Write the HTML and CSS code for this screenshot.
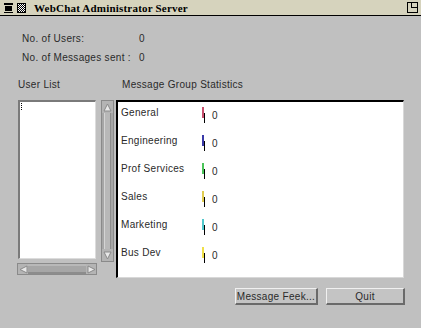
FILE: index.html
```html
<!DOCTYPE html>
<html lang="en">

<head>
  <meta charset="UTF-8">
  <title>WebChat Administrator Server</title>
  <link rel="stylesheet" href="styles.css">
</head>

<body>
  <div class="titlebar">
    <svg class="tb-icon" width="9" height="10" viewBox="0 0 9 10">
      <rect x="0" y="0" width="9" height="2" fill="#000"/>
      <rect x="1" y="3" width="7" height="5" fill="#000"/>
      <rect x="0" y="9" width="9" height="1" fill="#000"/>
    </svg>
    <svg class="tb-icon" width="9" height="10" viewBox="0 0 9 10">
      <rect x="0" y="0" width="9" height="10" fill="#000"/>
      <path d="M1 1h1v1h-1zM3 1h1v1h-1zM5 1h1v1h-1zM7 1h1v1h-1zM2 2h1v1h-1zM4 2h1v1h-1zM6 2h1v1h-1zM1 3h1v1h-1zM3 3h1v1h-1zM5 3h1v1h-1zM7 3h1v1h-1zM2 4h1v1h-1zM4 4h1v1h-1zM6 4h1v1h-1zM1 5h1v1h-1zM3 5h1v1h-1zM5 5h1v1h-1zM7 5h1v1h-1zM2 6h1v1h-1zM4 6h1v1h-1zM6 6h1v1h-1zM1 7h1v1h-1zM3 7h1v1h-1zM5 7h1v1h-1zM7 7h1v1h-1zM2 8h1v1h-1zM4 8h1v1h-1zM6 8h1v1h-1z" fill="#fff"/>
    </svg>
    <span class="title">WebChat Administrator Server</span>
    <svg class="tb-max" width="11" height="11" viewBox="0 0 11 11">
      <rect x="0.5" y="0.5" width="10" height="10" fill="none" stroke="#000"/>
      <rect x="4.5" y="0.5" width="6" height="5" fill="none" stroke="#000"/>
    </svg>
  </div>

  <div class="main">
    <div class="counts">
      <div class="count-row"><span class="count-label">No. of Users:</span><span>0</span></div>
      <div class="count-row"><span class="count-label">No. of Messages sent :</span><span>0</span></div>
    </div>

    <div class="labels">
      <span class="lbl-users">User List</span>
      <span class="lbl-stats">Message Group Statistics</span>
    </div>

    <div class="panels">
      <div class="list-col">
        <div class="user-list"><span class="caret"></span></div>
        <div class="hscroll">
          <span class="arrow-box">
            <svg width="9" height="9" viewBox="0 0 9 9"><path d="M1 4.5L8 1V8Z" fill="#e8e8e8" stroke="#8a8a8a"/></svg>
          </span>
          <span class="htrack"></span>
          <span class="arrow-box">
            <svg width="9" height="9" viewBox="0 0 9 9"><path d="M8 4.5L1 1V8Z" fill="#e8e8e8" stroke="#8a8a8a"/></svg>
          </span>
        </div>
      </div>

      <div class="vscroll">
        <span class="arrow-box">
          <svg width="9" height="9" viewBox="0 0 9 9"><path d="M4.5 1L8 8H1Z" fill="#e8e8e8" stroke="#8a8a8a"/></svg>
        </span>
        <span class="vtrack"></span>
        <span class="arrow-box">
          <svg width="9" height="9" viewBox="0 0 9 9"><path d="M4.5 8L8 1H1Z" fill="#e8e8e8" stroke="#8a8a8a"/></svg>
        </span>
      </div>

      <div class="stats">
        <div class="stat-row"><span class="group">General</span><span class="bar" style="background:#c8506e"></span><span class="tick"></span><span class="num">0</span></div>
        <div class="stat-row"><span class="group">Engineering</span><span class="bar" style="background:#3a3aa8"></span><span class="tick"></span><span class="num">0</span></div>
        <div class="stat-row"><span class="group">Prof Services</span><span class="bar" style="background:#4cc45a"></span><span class="tick"></span><span class="num">0</span></div>
        <div class="stat-row"><span class="group">Sales</span><span class="bar" style="background:#e0cc50"></span><span class="tick"></span><span class="num">0</span></div>
        <div class="stat-row"><span class="group">Marketing</span><span class="bar" style="background:#50c8cc"></span><span class="tick"></span><span class="num">0</span></div>
        <div class="stat-row"><span class="group">Bus Dev</span><span class="bar" style="background:#f0e048"></span><span class="tick"></span><span class="num">0</span></div>
      </div>
    </div>

    <div class="buttons">
      <button class="btn btn-feek">Message Feek...</button>
      <button class="btn btn-quit">Quit</button>
    </div>
  </div>
</body>

</html>
```

FILE: styles.css
```css
body {
  margin: 0;
  width: 421px;
  height: 328px;
  overflow: hidden;
  background-color: #c0c0c0;
  font-family: "Liberation Sans", Arial, sans-serif;
  font-size: 10px;
  color: #2a2a2a;
  letter-spacing: 0.3px;
}

.titlebar {
  display: flex;
  align-items: center;
  height: 15px;
  border-bottom: 1px solid #000;
  background-color: #d6d3bd;
  padding-left: 4px;
  padding-right: 3px;
}

.tb-icon {
  margin-right: 4px;
}

.title {
  margin-left: 4px;
  font-family: "Liberation Serif", "Times New Roman", serif;
  font-weight: bold;
  font-size: 11px;
  letter-spacing: 0.2px;
  color: #000;
}

.tb-max {
  margin-left: auto;
}

.main {
  display: flex;
  flex-direction: column;
}

.counts {
  padding-top: 13px;
  padding-left: 22px;
}

.count-row {
  display: flex;
  height: 19px;
  line-height: 19px;
}

.count-label {
  width: 117px;
}

.labels {
  display: flex;
  margin-top: 8px;
  height: 19px;
  line-height: 19px;
  padding-left: 18px;
}

.lbl-users {
  width: 104px;
}

.panels {
  display: flex;
  margin-top: 6px;
  padding-left: 17px;
}

.list-col {
  display: flex;
  flex-direction: column;
  width: 81px;
}

.user-list {
  margin-left: 1px;
  width: 75px;
  height: 156px;
  background: #fff;
  border-top: 2px solid #7a7a7a;
  border-left: 2px solid #7a7a7a;
  border-right: 1px solid #dcdcdc;
  border-bottom: 1px solid #dcdcdc;
}

.caret {
  display: block;
  margin: 1px 0 0 1px;
  width: 1px;
  height: 7px;
  border-left: 1px dotted #000;
}

.hscroll {
  display: flex;
  margin-top: 4px;
  width: 80px;
  height: 12px;
  background: #a6a6a6;
  border: 1px solid #8a8a8a;
  box-sizing: border-box;
}

.htrack {
  flex: 1;
  border-top: 2px solid #b8b8b8;
  border-bottom: 2px solid #8c8c8c;
}

.arrow-box {
  display: flex;
  align-items: center;
  justify-content: center;
  width: 10px;
  height: 10px;
  background: #b4b4b4;
}

.vscroll {
  display: flex;
  flex-direction: column;
  margin-left: 3px;
  width: 13px;
  height: 162px;
  background: #a6a6a6;
  border: 1px solid #8a8a8a;
  box-sizing: border-box;
}

.vscroll .arrow-box {
  width: 11px;
  height: 12px;
}

.vtrack {
  flex: 1;
  margin: 0 2px;
  background: #b8b8b8;
  border-left: 1px solid #d4d4d4;
  border-right: 1px solid #8c8c8c;
}

.stats {
  margin-left: 2px;
  width: 282px;
  height: 171px;
  padding-top: 4px;
  padding-left: 3px;
  background: #fff;
  border-top: 2px solid #000;
  border-left: 2px solid #000;
  border-right: 1px solid #d8d8d8;
  border-bottom: 1px solid #d8d8d8;
}

.stat-row {
  display: flex;
  align-items: flex-start;
  height: 28px;
}

.group {
  width: 81px;
  line-height: 13px;
}

.bar {
  width: 2px;
  height: 11px;
  margin-top: 1px;
}

.tick {
  width: 1px;
  height: 10px;
  margin-top: 7px;
  background: #000;
}

.num {
  margin-left: 7px;
  margin-top: 3px;
  line-height: 14px;
}

.buttons {
  display: flex;
  justify-content: flex-end;
  gap: 8px;
  margin-top: 10px;
  padding-right: 16px;
}

.btn {
  height: 17px;
  padding: 0;
  font-family: "Liberation Sans", Arial, sans-serif;
  font-size: 10px;
  letter-spacing: 0.3px;
  color: #2a2a2a;
  background: #c4c4c4;
  border-top: 1px solid #f0f0f0;
  border-left: 1px solid #f0f0f0;
  border-right: 2px solid #6a6a6a;
  border-bottom: 2px solid #6a6a6a;
}

.btn-feek {
  width: 83px;
}

.btn-quit {
  width: 79px;
}
```
